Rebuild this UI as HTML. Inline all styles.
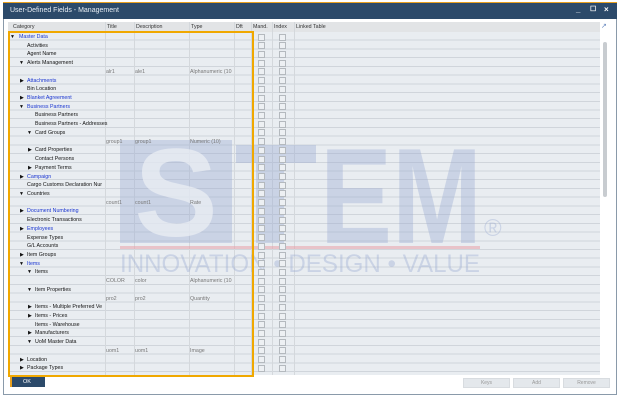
<!DOCTYPE html>
<html><head><meta charset="utf-8"><style>
*{margin:0;padding:0;box-sizing:border-box}
body{width:624px;height:400px;background:#fff;position:relative;overflow:hidden;font-family:"Liberation Sans",sans-serif}
.win{position:absolute;left:3px;top:2px;width:614px;height:393px;border:1px solid #8a9aaa;background:#fff}
.title{position:absolute;left:3px;top:2px;width:614px;height:17px;background:#2c4a6a;border-top:1px solid #e8a020;color:#e8eef4;font-size:7px;line-height:16px;padding-left:7px}
.ctl{position:absolute;top:2px;color:#fff;font-size:8px;line-height:16px;font-weight:bold}
.hdr{position:absolute;left:8px;top:22px;width:592px;height:10px;background:#e2e4e6;font-size:5.3px;line-height:10px;color:#333}
.hdr span{position:absolute;top:0}
.grid{position:absolute;left:8px;top:32px;width:592px;height:343px;background-color:#e9edf1;
background-image:repeating-linear-gradient(to bottom,transparent 0,transparent 7.72px,#d0d5db 7.72px,#d0d5db 8.72px)}
.vl{position:absolute;top:22px;height:353px;width:1px;background:#d4d8dc}
.rows{position:absolute;left:8px;top:33px;width:250px}
.r{height:8.72px;font-size:5.3px;line-height:8px;color:#111;position:relative;white-space:nowrap}
.r b{font-weight:normal;position:absolute;top:0}
.bl{color:#1a35d0}
.d{color:#777}
.ar{font-size:5px}
.cb{position:absolute;width:7px;height:7px;border:1px solid #b4b9be;background:#edf0f3}
.box{position:absolute;left:8px;top:31px;width:246px;height:346px;border:2px solid #f0a800}
.btn{position:absolute;top:378px;height:10px;width:47px;background:#e4e8ec;border:1px solid #d8dce0;font-size:5px;color:#999;text-align:center;line-height:9px}
</style></head><body>
<div class="win"></div>
<div class="title">User-Defined Fields - Management</div>
<div class="ctl" style="left:576px">_</div>
<div class="ctl" style="left:590px;font-size:7px">☐</div>
<div class="ctl" style="left:604px">×</div>
<div class="grid"></div>
<div class="hdr"><span style="left:5px">Category</span><span style="left:99px">Title</span><span style="left:128px">Description</span><span style="left:183px">Type</span><span style="left:228px">Dft</span><span style="left:245px">Mand.</span><span style="left:266px">Index</span><span style="left:288px">Linked Table</span></div>
<div class="vl" style="left:105px"></div><div class="vl" style="left:134px"></div><div class="vl" style="left:189px"></div><div class="vl" style="left:234px"></div><div class="vl" style="left:251px"></div><div class="vl" style="left:272px"></div><div class="vl" style="left:294px"></div>
<div style="position:absolute;left:603px;top:42px;width:4px;height:155px;background:#c8ccd0;border-radius:2px"></div>
<div style="position:absolute;left:601px;top:22px;font-size:7px;color:#6a8ac0">↗</div>

<svg style="position:absolute;left:0;top:0" width="624" height="400">
<g fill="#9aabd2" opacity="0.38">
<rect x="120" y="140" width="112" height="103"/>
<rect x="236" y="145" width="80" height="18"/>
<rect x="256" y="145" width="28" height="98"/>
<text x="320" y="243" font-family="Liberation Sans" font-weight="bold" font-size="136" textLength="162" lengthAdjust="spacingAndGlyphs">EM</text>
<text x="484" y="236" font-family="Liberation Sans" font-size="24">®</text>
<text x="120" y="272" font-family="Liberation Sans" font-size="25" textLength="360" lengthAdjust="spacingAndGlyphs">INNOVATION • DESIGN • VALUE</text>
</g>
<text x="176" y="236" text-anchor="middle" fill="#eef1f6" opacity="0.7" font-family="Liberation Sans" font-weight="bold" font-size="125">S</text>
<rect x="120" y="246" width="360" height="3" fill="#e8a0a8" opacity="0.55"/>
</svg>

<div class="rows">
<div class="r"><b class="ar" style="left:2px">▼</b><b class="bl" style="left:11px">Master Data</b></div>
<div class="r"><b style="left:19px">Activities</b></div>
<div class="r"><b style="left:19px">Agent Name</b></div>
<div class="r"><b class="ar" style="left:11px">▼</b><b style="left:19px">Alerts Management</b></div>
<div class="r d"><b style="left:98px">alr1</b><b style="left:127px">ale1</b><b style="left:182px">Alphanumeric (10</b></div>
<div class="r"><b class="ar" style="left:12px">▶</b><b class="bl" style="left:19px">Attachments</b></div>
<div class="r"><b style="left:19px">Bin Location</b></div>
<div class="r"><b class="ar" style="left:12px">▶</b><b class="bl" style="left:19px">Blanket Agreement</b></div>
<div class="r"><b class="ar" style="left:11px">▼</b><b class="bl" style="left:19px">Business Partners</b></div>
<div class="r"><b style="left:27px">Business Partners</b></div>
<div class="r"><b style="left:27px">Business Partners - Addresses</b></div>
<div class="r"><b class="ar" style="left:19px">▼</b><b style="left:27px">Card Groups</b></div>
<div class="r d"><b style="left:98px">group1</b><b style="left:127px">group1</b><b style="left:182px">Numeric (10)</b></div>
<div class="r"><b class="ar" style="left:20px">▶</b><b style="left:27px">Card Properties</b></div>
<div class="r"><b style="left:27px">Contact Persons</b></div>
<div class="r"><b class="ar" style="left:20px">▶</b><b style="left:27px">Payment Terms</b></div>
<div class="r"><b class="ar" style="left:12px">▶</b><b class="bl" style="left:19px">Campaign</b></div>
<div class="r"><b style="left:19px">Cargo Customs Declaration Nur</b></div>
<div class="r"><b class="ar" style="left:11px">▼</b><b style="left:19px">Countries</b></div>
<div class="r d"><b style="left:98px">count1</b><b style="left:127px">count1</b><b style="left:182px">Rate</b></div>
<div class="r"><b class="ar" style="left:12px">▶</b><b class="bl" style="left:19px">Document Numbering</b></div>
<div class="r"><b style="left:19px">Electronic Transactions</b></div>
<div class="r"><b class="ar" style="left:12px">▶</b><b class="bl" style="left:19px">Employees</b></div>
<div class="r"><b style="left:19px">Expense Types</b></div>
<div class="r"><b style="left:19px">G/L Accounts</b></div>
<div class="r"><b class="ar" style="left:12px">▶</b><b style="left:19px">Item Groups</b></div>
<div class="r"><b class="ar" style="left:11px">▼</b><b class="bl" style="left:19px">Items</b></div>
<div class="r"><b class="ar" style="left:19px">▼</b><b style="left:27px">Items</b></div>
<div class="r d"><b style="left:98px">COLOR</b><b style="left:127px">color</b><b style="left:182px">Alphanumeric (10</b></div>
<div class="r"><b class="ar" style="left:19px">▼</b><b style="left:27px">Item Properties</b></div>
<div class="r d"><b style="left:98px">pro2</b><b style="left:127px">pro2</b><b style="left:182px">Quantity</b></div>
<div class="r"><b class="ar" style="left:20px">▶</b><b style="left:27px">Items - Multiple Preferred Ve</b></div>
<div class="r"><b class="ar" style="left:20px">▶</b><b style="left:27px">Items - Prices</b></div>
<div class="r"><b style="left:27px">Items - Warehouse</b></div>
<div class="r"><b class="ar" style="left:20px">▶</b><b style="left:27px">Manufacturers</b></div>
<div class="r"><b class="ar" style="left:19px">▼</b><b style="left:27px">UoM Master Data</b></div>
<div class="r d"><b style="left:98px">uom1</b><b style="left:127px">uom1</b><b style="left:182px">Image</b></div>
<div class="r"><b class="ar" style="left:12px">▶</b><b style="left:19px">Location</b></div>
<div class="r"><b class="ar" style="left:12px">▶</b><b style="left:19px">Package Types</b></div>
</div>
<div id="cbs"></div>
<script>
var h='';for(var i=0;i<39;i++){var t=(33.5+i*8.72).toFixed(2);h+='<div class="cb" style="left:258px;top:'+t+'px"></div><div class="cb" style="left:279px;top:'+t+'px"></div>';}
document.getElementById('cbs').innerHTML=h;
</script>
<div class="box"></div>
<div style="position:absolute;left:10px;top:377px;width:35px;height:10px;background:#2c4a6a;border-left:2px solid #e8a020;color:#fff;font-size:5.5px;line-height:10px;padding-left:11px">OK</div>
<div class="btn" style="left:463px">Keys</div>
<div class="btn" style="left:513px">Add</div>
<div class="btn" style="left:563px">Remove</div>
</body></html>
